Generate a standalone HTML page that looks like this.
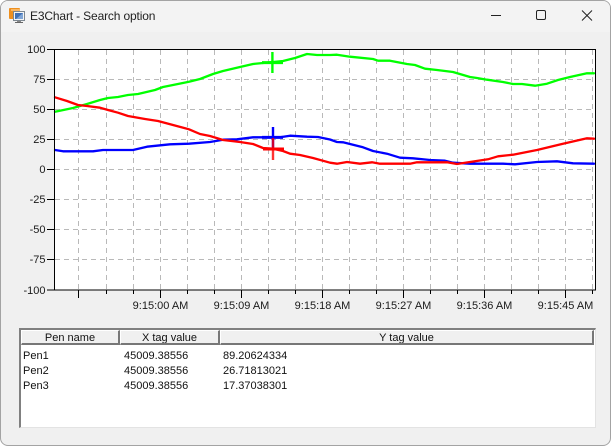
<!DOCTYPE html>
<html><head><meta charset="utf-8"><style>
html,body{margin:0;padding:0;width:611px;height:446px;overflow:hidden;background:#fff;font-family:"Liberation Sans",sans-serif}
#win{position:absolute;left:0;top:0;width:609px;height:444px;background:#f0f0f0;border:1px solid #a3a3a3;border-radius:8px;overflow:hidden}
#tb{position:absolute;left:0;top:0;width:609px;height:31px;background:#f3f3f3}
#title{position:absolute;left:29px;top:8px;font-size:12px;line-height:15px;color:#222;letter-spacing:-.15px;white-space:nowrap}
svg{position:absolute;left:0;top:0}
svg text{font-family:"Liberation Sans",sans-serif;font-size:11px;fill:#1a1a1a}
#list{position:absolute;left:19px;top:328px;width:574px;height:97px;background:#fff;border:1px solid;border-color:#808080 #e3e3e3 #e3e3e3 #808080;border-top-width:2px;border-left-width:2px;box-sizing:content-box}
.h{position:absolute;top:0;height:12px;background:#f0f0f0;box-sizing:content-box;border-style:solid;border-width:1px 2px 2px 1px;border-color:#fff #777 #777 #fff;font-size:11px;line-height:15px;text-align:center;color:#111;overflow:hidden}
.c{position:absolute;font-size:11px;line-height:14px;color:#111;white-space:nowrap}
</style></head><body>
<div id="win">
<div id="tb"></div>
<div id="title">E3Chart - Search option</div>
</div>
<svg width="611" height="446" viewBox="0 0 611 446">
<!-- app icon -->
<rect x="9" y="8" width="11" height="11" fill="#ee8f1e" rx="1"/>
<rect x="11" y="9" width="9" height="2" fill="#f8b765"/>
<rect x="13.5" y="11.5" width="11" height="9" fill="#f4f4f4" stroke="#7d8790"/>
<rect x="15" y="13" width="8" height="6" fill="#3f70b5"/>
<path d="M16 19 L23 13 V19Z" fill="#7fa5d6"/>
<rect x="17" y="21" width="4" height="1" fill="#888"/>
<rect x="15" y="22" width="8" height="1" fill="#666"/>
<!-- window controls -->
<path d="M491 15.5H501" stroke="#222" fill="none"/>
<rect x="536.5" y="10.5" width="9" height="9" rx="1.5" fill="none" stroke="#222"/>
<path d="M582 10.5L592 20.5M592 10.5L582 20.5" stroke="#222" fill="none"/>
<!-- plot -->
<rect x="54" y="49" width="542" height="241" fill="#fff"/>
<g stroke="#b9b9b9" stroke-dasharray="5 4" fill="none">
<path d="M55 79.5H595M55 109.5H595M55 139.5H595M55 169.5H595M55 199.5H595M55 229.5H595M55 259.5H595"/>
<path d="M78.5 50V289M106.5 50V289M133.5 50V289M160.5 50V289M187.5 50V289M214.5 50V289M241.5 50V289M268.5 50V289M295.5 50V289M322.5 50V289M349.5 50V289M376.5 50V289M403.5 50V289M430.5 50V289M457.5 50V289M484.5 50V289M511.5 50V289M538.5 50V289M565.5 50V289M592.5 50V289"/>
</g>
<g fill="none" stroke-width="2.3" stroke-linejoin="round" stroke-linecap="round">
<polyline stroke="#00ff00" points="55,111.7 73,108 87,104 100,100 108,98 118,97 128,95 138,94 155,90 163,87 173,85 189,81.7 200,79 213,74 223,71 240,67 253,64 263,63 283,61 295,58 307,54 317,55 330,55 337,54.7 350,56.7 373,59 378,60.7 390,60.7 407,64 415,65 425,68.7 437,70 453,72 470,77 477,78 487,79.7 503,82 513,84 522,84 535,85.7 547,83.7 558,80 570,77 587,73.3 594,73.3"/>
<polyline stroke="#0000ff" points="55,150 63,151.3 93,151.3 103,150 133,150 147,146.7 170,144.3 189,143.7 210,142 223,139.7 237,139.3 253,137.3 280,137.3 290,135.7 307,136.7 318,137 330,139.5 337,142 343,142.3 363,147.3 373,151 387,153.7 400,157.7 413,158.3 430,160 445,160.7 453,162.7 470,163.7 503,163.7 515,164.3 537,162 557,161.3 573,163.3 594,163.7"/>
<polyline stroke="#ff0000" points="55,97.3 67,101 78,105 87,106 100,107.7 108,110 118,112.7 128,116 145,119 158,121 173,125 189,129.3 200,134 210,136 223,140 240,142 253,144 263,148 273,148.7 283,151 290,153.7 300,155 313,158 330,162.7 337,163.7 347,162 360,163.7 372,162.3 380,163.7 410,163.7 417,162.3 447,162.3 457,164 470,162 488,159.3 498,156.3 513,154.7 537,150 563,143.7 587,138.3 594,138.7"/>
</g>
<!-- cursor crosses -->
<g fill="none">
<path d="M272.4 52V73" stroke="#00ff00" stroke-width="2.4"/>
<path d="M262 62.6H283" stroke="#00ff00" stroke-width="3"/>
<path d="M273 127V148" stroke="#0000ff" stroke-width="2.4"/>
<path d="M262 137.4H283" stroke="#0000ff" stroke-width="3"/>
<path d="M273 138V160" stroke="#ff0000" stroke-width="2.4" opacity=".8"/>
<path d="M263 149H284" stroke="#ff0000" stroke-width="3"/>
</g>
<!-- axes -->
<path d="M54.5 49V290M595.5 49V290" stroke="#000" fill="none"/>
<path d="M54 49.5H596M54 290H596" stroke="#000" fill="none"/>
<path d="M47 49.5H54M47 79.5H54M47 109.5H54M47 139.5H54M47 169.5H54M47 199.5H54M47 229.5H54M47 259.5H54M47 290H54" stroke="#000" fill="none"/>
<path d="M106.5 290V294M133.5 290V294M187.5 290V294M214.5 290V294M268.5 290V294M295.5 290V294M349.5 290V294M376.5 290V294M430.5 290V294M457.5 290V294M511.5 290V294M538.5 290V294M592.5 290V294" stroke="#000" fill="none"/>
<path d="M78.5 290V298M160.5 290V298M241.5 290V298M322.5 290V298M403.5 290V298M484.5 290V298M565.5 290V298" stroke="#000" fill="none"/>
<g text-anchor="end">
<text x="45.5" y="53">100</text><text x="45.5" y="83">75</text><text x="45.5" y="113">50</text><text x="45.5" y="143">25</text><text x="45.5" y="173">0</text><text x="45.5" y="203">-25</text><text x="45.5" y="233">-50</text><text x="45.5" y="263">-75</text><text x="45.5" y="294">-100</text>
</g>
<g text-anchor="middle">
<text x="160.5" y="309">9:15:00 AM</text><text x="241.5" y="309">9:15:09 AM</text><text x="322.5" y="309">9:15:18 AM</text><text x="403.5" y="309">9:15:27 AM</text><text x="484.5" y="309">9:15:36 AM</text><text x="565.5" y="309">9:15:45 AM</text>
</g>
</svg>
<div id="list">
<div class="h" style="left:0;width:96px">Pen name</div>
<div class="h" style="left:99px;width:97px">X tag value</div>
<div class="h" style="left:199px;width:371px">Y tag value</div>
<div class="c" style="left:2px;top:19px">Pen1</div><div class="c" style="left:103px;top:19px">45009.38556</div><div class="c" style="left:202px;top:19px">89.20624334</div>
<div class="c" style="left:2px;top:34px">Pen2</div><div class="c" style="left:103px;top:34px">45009.38556</div><div class="c" style="left:202px;top:34px">26.71813021</div>
<div class="c" style="left:2px;top:49px">Pen3</div><div class="c" style="left:103px;top:49px">45009.38556</div><div class="c" style="left:202px;top:49px">17.37038301</div>
</div>
</body></html>
